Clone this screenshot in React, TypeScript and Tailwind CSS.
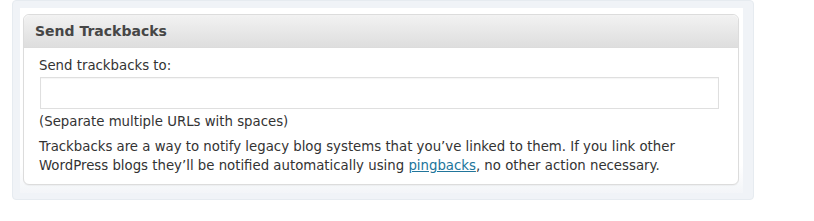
export default function App() {
  return (
    <div className="w-[814px] h-[221px] bg-white font-['DejaVu_Sans',sans-serif]">
      <div className="ml-[12px] w-[742px] rounded-[4px] border border-[#e6ebf0] bg-[#f0f3f7] pt-[7px] pl-[7px] pr-[10px] pb-[6px]">
        <div className="bg-gradient-to-b from-white from-85% to-[#f3f5f8] pt-[6px] pl-[3px] pr-[4px] pb-[8px]">
          <div className="rounded-[6px] border border-[#dcdcdc] bg-white shadow-[0_1px_1px_rgba(0,0,0,0.04)]">
            <div className="flex h-[33px] items-center rounded-t-[6px] border-b border-[#dcdcdc] bg-gradient-to-b from-[#f2f2f2] to-[#dedede] pl-[11px]">
              <h3 className="text-[14px] font-bold text-[#464646]">Send Trackbacks</h3>
            </div>
            <div className="pl-[15px] pr-[20px] pt-[8px] pb-[9px] text-[13.3px] leading-[19px] text-[#333]">
              <label className="block">Send trackbacks to:</label>
              <input
                type="text"
                className="mt-[2px] ml-[1px] block h-[32px] w-[679px] border border-[#dfdfdf] bg-white shadow-[inset_0_1px_1px_rgba(0,0,0,0.04)] outline-none"
              />
              <p className="mt-[3px]">(Separate multiple URLs with spaces)</p>
              <p className="mt-[6px]">
                Trackbacks are a way to notify legacy blog systems that you’ve linked to them. If you link other
                <br />
                WordPress blogs they’ll be notified automatically using{" "}
                <a href="#" className="text-[#21759b] underline">
                  pingbacks
                </a>
                , no other action necessary.
              </p>
            </div>
          </div>
        </div>
      </div>
    </div>
  );
}
